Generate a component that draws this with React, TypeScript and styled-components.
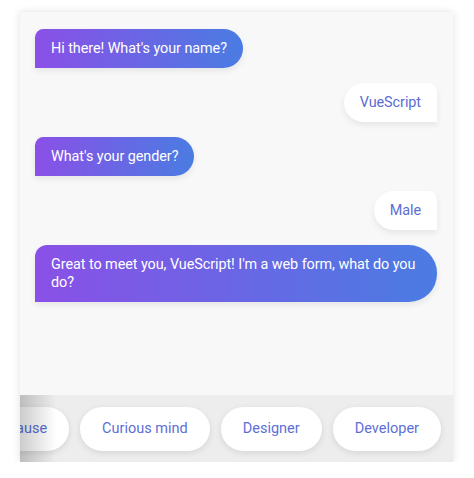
import React from "react";
import styled, { createGlobalStyle } from "styled-components";

const GlobalStyle = createGlobalStyle`
  html, body {
    margin: 0;
    padding: 0;
    background: #fff;
  }
  body {
    font-family: "Roboto", "Noto Sans", sans-serif;
  }
  * {
    box-sizing: border-box;
  }
`;

const Card = styled.div`
  width: 433px;
  height: 450px;
  margin: 12px 0 0 20px;
  background: #f8f8f8;
  box-shadow: 0 0 8px rgba(0, 0, 0, 0.12);
  display: flex;
  flex-direction: column;
`;

const Messages = styled.div`
  flex: 1;
  display: flex;
  flex-direction: column;
  gap: 15px;
  padding: 17px 16px 0 15px;
`;

const Bubble = styled.div<{ $user?: boolean }>`
  align-self: ${(p) => (p.$user ? "flex-end" : "flex-start")};
  max-width: 100%;
  padding: 10.5px 16px;
  font-size: 14.4px;
  letter-spacing: -0.06px;
  line-height: 18px;
  color: ${(p) => (p.$user ? "#5b6dd3" : "#fff")};
  background: ${(p) =>
    p.$user ? "#fff" : "linear-gradient(90deg, #8a50e7 0%, #4a7ce2 100%)"};
  border-radius: ${(p) => (p.$user ? "28px 12px 0 28px" : "12px 28px 28px 0")};
  box-shadow: 0 3px 6px rgba(0, 0, 0, 0.08);
`;

const Footer = styled.div`
  position: relative;
  height: 67px;
  background: #ededed;
  overflow: hidden;
  display: flex;
  align-items: center;
  justify-content: flex-end;
  gap: 11px;
  padding-right: 12px;

  &::before {
    content: "";
    position: absolute;
    left: 0;
    top: 0;
    bottom: 0;
    width: 36px;
    background: linear-gradient(90deg, rgba(0, 0, 0, 0.2), rgba(0, 0, 0, 0));
    z-index: 1;
  }
`;

const Chip = styled.button`
  flex: none;
  height: 44px;
  padding: 0 22px;
  border: none;
  border-radius: 22px;
  background: #fff;
  color: #5c70d5;
  font-family: inherit;
  font-size: 14.5px;
  box-shadow: 0 2px 6px rgba(0, 0, 0, 0.1);
  cursor: pointer;
`;

const messages = [
  { text: "Hi there! What's your name?" },
  { text: "VueScript", user: true },
  { text: "What's your gender?" },
  { text: "Male", user: true },
  { text: "Great to meet you, VueScript! I'm a web form, what do you do?" },
];

const choices = ["Just because", "Curious mind", "Designer", "Developer"];

export default function App() {
  return (
    <>
      <GlobalStyle />
      <Card>
        <Messages>
          {messages.map((m, i) => (
            <Bubble key={i} $user={m.user}>
              {m.text}
            </Bubble>
          ))}
        </Messages>
        <Footer>
          {choices.map((c) => (
            <Chip key={c}>{c}</Chip>
          ))}
        </Footer>
      </Card>
    </>
  );
}
